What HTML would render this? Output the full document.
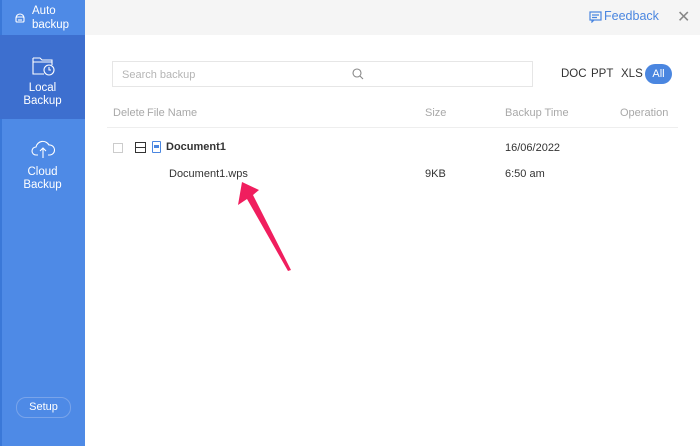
<!DOCTYPE html>
<html><head><style>
body{margin:0;width:700px;height:446px;position:relative;font-family:"Liberation Sans",sans-serif;background:#fff;overflow:hidden}
.sb{position:absolute;left:0;top:0;width:85px;height:446px;background:#4e8ae6}
.sb:before{content:"";position:absolute;left:0;top:0;width:2px;height:446px;background:#3a78d8}
.top{position:absolute;left:85px;top:0;right:0;height:35px;background:#f5f5f5}
.t{position:absolute;white-space:nowrap}
.w{color:#fff;font-size:11px;text-align:center;line-height:13px}
.g{color:#a8a8a8;font-size:11px}
.d{color:#333;font-size:11px}
</style></head><body>
<div class="sb"></div>
<div style="position:absolute;left:0;top:35px;width:85px;height:84px;background:#3d6fcf"></div>
<svg style="position:absolute;left:13px;top:10px" width="14" height="14" viewBox="0 0 14 14" fill="none" stroke="#fff" stroke-width="1.1"><path d="M3 8a4 4 0 0 1 8 0"/><rect x="3" y="7" width="8" height="5" rx="1"/><path d="M5 10h4"/></svg>
<div class="t w" style="left:32px;top:4px;text-align:left;line-height:14px;font-size:11.5px">Auto<br>backup</div>
<svg style="position:absolute;left:32px;top:55px" width="24" height="22" viewBox="0 0 24 22" fill="none" stroke="#fff" stroke-width="1.1"><path d="M1 3h7l2 2h10v5M1 3v16h11"/><path d="M1 7h19"/><circle cx="17" cy="15" r="5"/><path d="M17 12v3h2"/></svg>
<div class="t w" style="left:0;width:85px;top:82px;font-size:11.5px">Local<br>Backup</div>
<svg style="position:absolute;left:31px;top:137px" width="24" height="22" viewBox="0 0 24 22" fill="none" stroke="#fff" stroke-width="1.1"><path d="M7 18H5a4 4 0 0 1 0-8 7 7 0 0 1 13-2 5 5 0 0 1 1 10h-2"/><path d="M12 21V11M9 14l3-3 3 3"/></svg>
<div class="t w" style="left:0;width:85px;top:166px;font-size:11.5px">Cloud<br>Backup</div>
<div style="position:absolute;left:16px;top:397px;width:53px;height:19px;border:1px solid #79a4ea;border-radius:10px;color:#fff;font-size:11px;text-align:center;line-height:19px">Setup</div>
<div class="top"></div>
<svg style="position:absolute;left:589px;top:11px" width="13" height="12" viewBox="0 0 13 12" fill="none" stroke="#4a86e0" stroke-width="1.2"><rect x="1" y="1" width="11" height="8"/><path d="M3 4h7M3 6.5h5M3 9v2l2-2"/></svg>
<div class="t" style="left:604px;top:9px;color:#4a86e0;font-size:12.5px">Feedback</div>
<div class="t" style="left:677px;top:7px;color:#888;font-size:16px">✕</div>
<div style="position:absolute;left:112px;top:61px;width:421px;height:26px;border:1px solid #e6e6e6;box-sizing:border-box"></div>
<div class="t g" style="left:122px;top:69px;color:#b5b5b5">Search backup</div>
<svg style="position:absolute;left:352px;top:68px" width="12" height="12" viewBox="0 0 12 12" fill="none" stroke="#888" stroke-width="1.1"><circle cx="5" cy="5" r="4"/><path d="M8 8l3 3"/></svg>
<div class="t d" style="left:561px;top:68px;font-size:11.5px">DOC</div>
<div class="t d" style="left:591px;top:68px;font-size:11.5px">PPT</div>
<div class="t d" style="left:621px;top:68px;font-size:11.5px">XLS</div>
<div style="position:absolute;left:645px;top:64px;width:27px;height:20px;border-radius:10px;background:#4a86e0;color:#fff;font-size:11px;text-align:center;line-height:20px">All</div>
<div class="t g" style="left:113px;top:107px">Delete</div>
<div class="t g" style="left:147px;top:107px">File Name</div>
<div class="t g" style="left:425px;top:107px">Size</div>
<div class="t g" style="left:505px;top:107px">Backup Time</div>
<div class="t g" style="left:620px;top:107px">Operation</div>
<div style="position:absolute;left:107px;top:127px;width:571px;height:1px;background:#eee"></div>
<div style="position:absolute;left:113px;top:143px;width:8px;height:8px;border:1px solid #ccc"></div>
<div style="position:absolute;left:135px;top:142px;width:9px;height:9px;border:1px solid #333"><div style="margin-top:4px;height:1px;background:#333"></div></div>
<div style="position:absolute;left:152px;top:141px;width:7px;height:10px;border:1px solid #4a86e0;border-radius:1px"><div style="margin:3px 1px;height:3px;background:#4a86e0"></div></div>
<div class="t d" style="left:166px;top:141px;font-weight:bold">Document1</div>
<div class="t d" style="left:505px;top:142px">16/06/2022</div>
<div class="t d" style="left:169px;top:168px">Document1.wps</div>
<div class="t d" style="left:425px;top:168px">9KB</div>
<div class="t d" style="left:505px;top:168px">6:50 am</div>
<svg style="position:absolute;left:0;top:0" width="700" height="446"><path d="M242 182L259 190L253 195L291 270L288 271L247 199L238 205Z" fill="#f01e5e"/></svg>
</body></html>
